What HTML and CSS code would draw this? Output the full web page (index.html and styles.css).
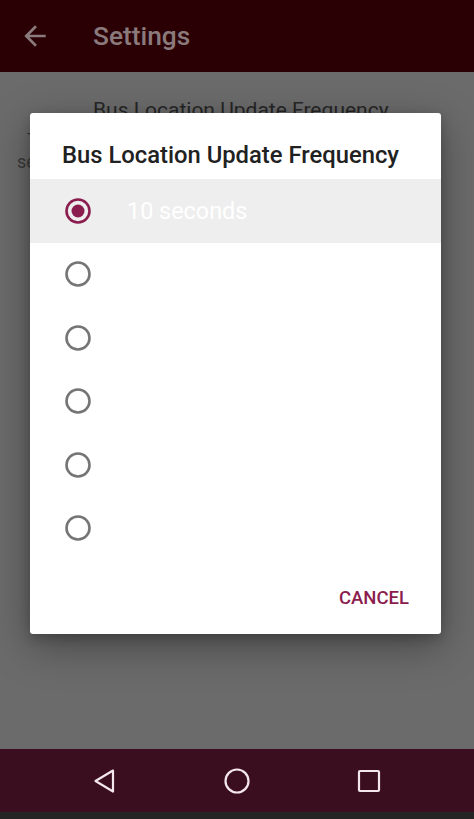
FILE: index.html
```html
<!DOCTYPE html>
<html>
<head>
<meta charset="utf-8">
<link rel="stylesheet" href="styles.css">
</head>
<body>
<div class="screen">
  <header class="appbar">
    <svg class="back" width="32" height="32" viewBox="0 0 24 24"><path d="M20 11H7.83l5.59-5.59L12 4l-8 8 8 8 1.41-1.41L7.83 13H20v-2z" fill="#8a7a7c"/></svg>
    <span class="appbar-title">Settings</span>
  </header>
  <main class="content">
    <div class="pref-title">Bus Location Update Frequency</div>
    <div class="pref-dash">–</div>
    <div class="pref-summary">se</div>
  </main>
  <nav class="navbar">
    <svg width="26" height="28" viewBox="0 0 26 28"><path d="M21 3.5 L3.5 14 L21 24.5 Z" fill="none" stroke="#f3e6ec" stroke-width="2.2" stroke-linejoin="round"/></svg>
    <svg width="28" height="28" viewBox="0 0 28 28"><circle cx="14" cy="14" r="11.5" fill="none" stroke="#f3e6ec" stroke-width="2.2"/></svg>
    <svg width="26" height="26" viewBox="0 0 26 26"><rect x="3" y="3" width="20" height="20" rx="1" fill="none" stroke="#f3e6ec" stroke-width="2.2"/></svg>
  </nav>
  <div class="bottom-strip"></div>

  <div class="dialog">
    <div class="dialog-title">Bus Location Update Frequency</div>
    <ul class="options">
      <li class="option selected">
        <svg class="radio" width="26" height="26" viewBox="0 0 26 26"><circle cx="13" cy="13" r="11.5" fill="none" stroke="#8a1d4e" stroke-width="2.6"/><circle cx="13" cy="13" r="6.5" fill="#8a1d4e"/></svg>
        <span class="option-label">10 seconds</span>
      </li>
      <li class="option"><svg class="radio" width="26" height="26" viewBox="0 0 26 26"><circle cx="13" cy="13" r="11.5" fill="none" stroke="#757575" stroke-width="2.6"/></svg><span class="option-label"></span></li>
      <li class="option"><svg class="radio" width="26" height="26" viewBox="0 0 26 26"><circle cx="13" cy="13" r="11.5" fill="none" stroke="#757575" stroke-width="2.6"/></svg><span class="option-label"></span></li>
      <li class="option"><svg class="radio" width="26" height="26" viewBox="0 0 26 26"><circle cx="13" cy="13" r="11.5" fill="none" stroke="#757575" stroke-width="2.6"/></svg><span class="option-label"></span></li>
      <li class="option"><svg class="radio" width="26" height="26" viewBox="0 0 26 26"><circle cx="13" cy="13" r="11.5" fill="none" stroke="#757575" stroke-width="2.6"/></svg><span class="option-label"></span></li>
      <li class="option"><svg class="radio" width="26" height="26" viewBox="0 0 26 26"><circle cx="13" cy="13" r="11.5" fill="none" stroke="#757575" stroke-width="2.6"/></svg><span class="option-label"></span></li>
    </ul>
    <div class="actions">
      <span class="cancel">CANCEL</span>
    </div>
  </div>
</div>
</body>
</html>
```

FILE: styles.css
```css
* { box-sizing: border-box; }
html, body { margin: 0; padding: 0; }
body {
  width: 474px;
  height: 819px;
  overflow: hidden;
  font-family: Roboto, "Noto Sans", "Liberation Sans", sans-serif;
  background: #222;
}
.screen {
  position: relative;
  width: 474px;
  height: 819px;
  display: flex;
  flex-direction: column;
}
.appbar {
  height: 72px;
  flex: none;
  background: #2a0004;
  display: flex;
  align-items: center;
  padding-left: 19px;
}
.back { flex: none; }
.appbar-title {
  margin-left: 42px;
  font-size: 26.3px;
  font-weight: 500;
  color: #8a7a7c;
  line-height: 32px;
}
.content {
  flex: 1;
  background: #6b6b6b;
  padding-top: 25px;
  color: #262626;
}
.pref-title {
  margin-left: 93px;
  font-size: 21px;
  line-height: 27px;
}
.pref-dash {
  margin-left: 26px;
  font-size: 18px;
  line-height: 20px;
  color: #333;
}
.pref-summary {
  margin-left: 17px;
  margin-top: 6px;
  font-size: 18px;
  line-height: 24px;
  color: #3a3a3a;
}
.navbar {
  height: 63px;
  flex: none;
  background: #3a0e1e;
  display: grid;
  grid-template-columns: repeat(3, 132px);
  justify-content: center;
  justify-items: center;
  align-items: center;
}
.bottom-strip {
  height: 7px;
  flex: none;
  background: #242424;
}
.dialog {
  position: absolute;
  left: 30px;
  top: 113px;
  width: 411px;
  height: 521px;
  background: #fff;
  border-radius: 3px;
  box-shadow: 0 12px 40px rgba(0,0,0,0.35), 0 4px 12px rgba(0,0,0,0.2);
  display: flex;
  flex-direction: column;
}
.dialog-title {
  padding: 27px 0 0 32px;
  height: 66px;
  font-size: 23.8px;
  font-weight: 500;
  color: #212121;
  line-height: 30px;
  white-space: nowrap;
}
.options {
  list-style: none;
  margin: 0;
  padding: 0;
}
.option {
  height: 63.5px;
  display: flex;
  align-items: center;
  padding-left: 35px;
}
.option.selected { background: #eeeeee; }
.radio { flex: none; }
.option-label {
  margin-left: 36px;
  font-size: 23.4px;
  color: #ffffff;
}
.actions {
  flex: 1;
  display: flex;
  justify-content: flex-end;
  align-items: center;
  padding-right: 32px;
}
.cancel {
  font-size: 18.5px;
  font-weight: 500;
  color: #8a1d4e;
  margin-top: 2px;
}
```
